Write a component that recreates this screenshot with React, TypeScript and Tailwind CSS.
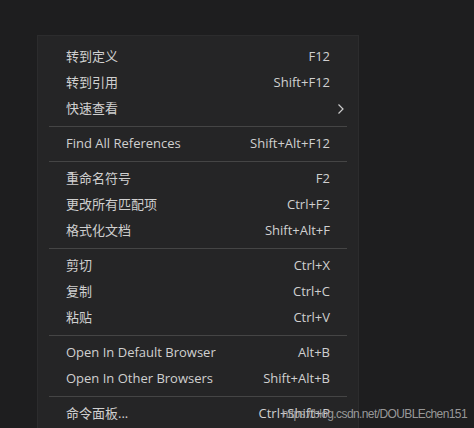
import React from 'react';

type Item = { label: string; keys?: string; sub?: boolean };

const groups: Item[][] = [
  [
    { label: '转到定义', keys: 'F12' },
    { label: '转到引用', keys: 'Shift+F12' },
    { label: '快速查看', sub: true },
  ],
  [{ label: 'Find All References', keys: 'Shift+Alt+F12' }],
  [
    { label: '重命名符号', keys: 'F2' },
    { label: '更改所有匹配项', keys: 'Ctrl+F2' },
    { label: '格式化文档', keys: 'Shift+Alt+F' },
  ],
  [
    { label: '剪切', keys: 'Ctrl+X' },
    { label: '复制', keys: 'Ctrl+C' },
    { label: '粘贴', keys: 'Ctrl+V' },
  ],
  [
    { label: 'Open In Default Browser', keys: 'Alt+B' },
    { label: 'Open In Other Browsers', keys: 'Shift+Alt+B' },
  ],
  [{ label: '命令面板...', keys: 'Ctrl+Shift+P' }],
];

const Row: React.FC<{ item: Item }> = ({ item }) => (
  <div className="relative flex h-[26px] items-center justify-between pl-[28px] pr-[28px]">
    <span>{item.label}</span>
    {item.keys && <span>{item.keys}</span>}
    {item.sub && (
      <svg className="absolute right-[13px] top-1/2 -translate-y-1/2" width="8" height="12" viewBox="0 0 8 12" fill="none">
        <path d="M1.5 1.5 L6 6 L1.5 10.5" stroke="#cccccc" strokeWidth="1.2" />
      </svg>
    )}
  </div>
);

export default function App() {
  return (
    <div
      className="relative h-[428px] w-[474px] overflow-hidden bg-[#1e1e1f] pl-[37px] pt-[35px] text-[13px] text-[#d0d0d0]"
      style={{ fontFamily: '"Open Sans", "Noto Sans CJK SC", sans-serif' }}
    >
      <div className="w-[322px] border border-[#2c2c2d] bg-[#252526] pt-[8px] pb-[20px]">
        {groups.map((g, i) => (
          <div key={i}>
            {i > 0 && <div className="mx-[11px] my-[4px] h-px bg-[#454545]" />}
            {g.map((item) => (
              <Row key={item.label} item={item} />
            ))}
          </div>
        ))}
      </div>
      <div
        className="absolute right-[7px] top-[406px] text-[12px] leading-[16px] tracking-[-0.6px] text-[#a8a8a8]/90"
        style={{ fontFamily: '"Liberation Sans", sans-serif' }}
      >
        https://blog.csdn.net/DOUBLEchen151
      </div>
    </div>
  );
}
